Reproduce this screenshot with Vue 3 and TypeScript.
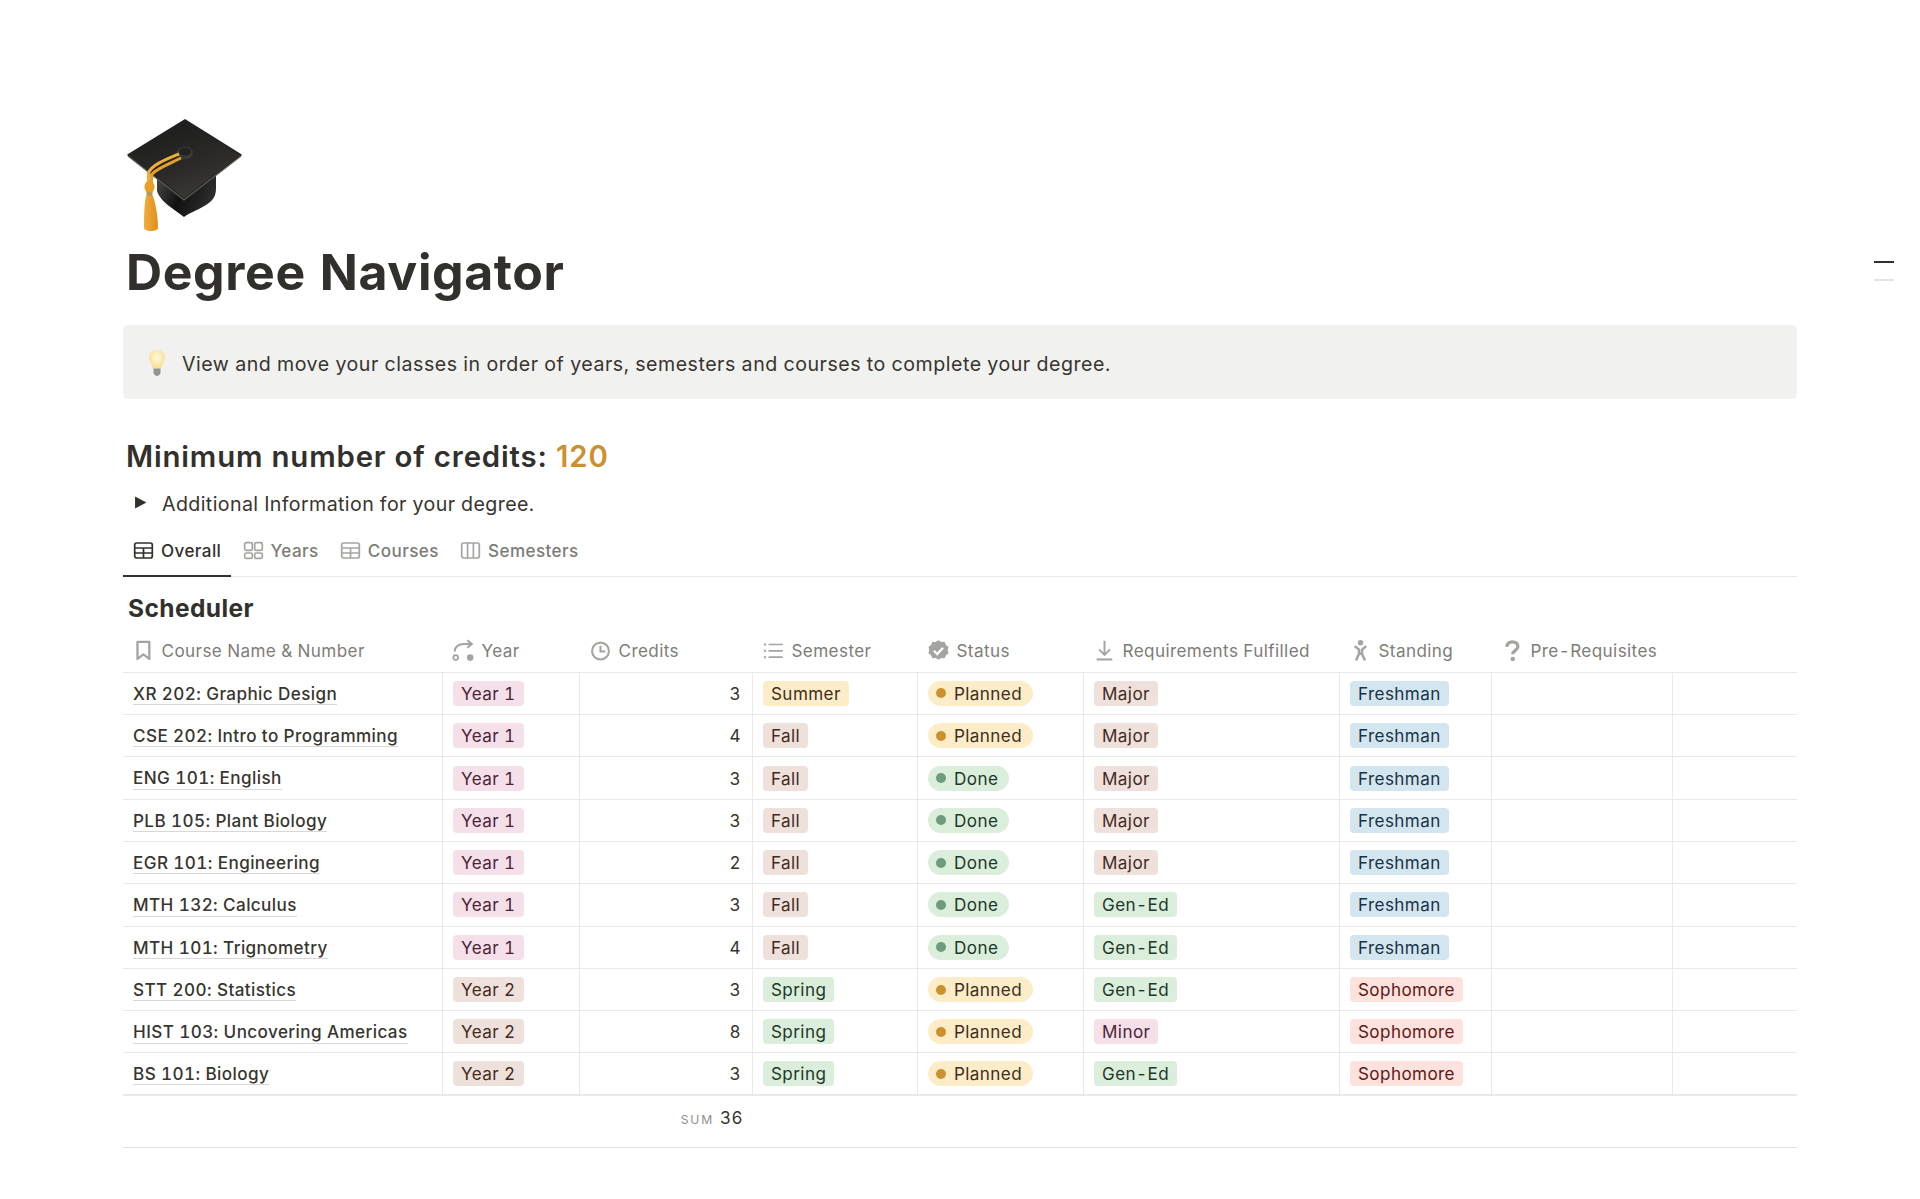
<script setup lang="ts">
type Tone = "pink" | "brown" | "yellow" | "green" | "blue" | "red";

interface Course {
  name: string;
  year: string;
  credits: number;
  semester: string;
  status: string;
  req: string;
  standing: string;
}

const tones: Record<string, Tone> = {
  "Year 1": "pink",
  "Year 2": "brown",
  Summer: "yellow",
  Fall: "brown",
  Spring: "green",
  Planned: "yellow",
  Done: "green",
  Major: "brown",
  Minor: "pink",
  "Gen-Ed": "green",
  Freshman: "blue",
  Sophomore: "red",
};

const tableIcon =
  '<rect x="1.7" y="3" width="17.6" height="15" rx="2" fill="none" stroke="currentColor" stroke-width="1.7"/><path d="M2 8h17M2 13h17M10.5 8v10" fill="none" stroke="currentColor" stroke-width="1.7"/>';
const galleryIcon =
  '<g fill="none" stroke="currentColor" stroke-width="1.7"><rect x="1.7" y="2.7" width="7.6" height="7.6" rx="1.4"/><rect x="11.7" y="2.7" width="7.6" height="7.6" rx="1.4"/><rect x="1.7" y="13" width="7.6" height="5.3" rx="1.4"/><rect x="11.7" y="13" width="7.6" height="5.3" rx="1.4"/></g>';
const boardIcon =
  '<rect x="1.7" y="3" width="17.6" height="15" rx="2" fill="none" stroke="currentColor" stroke-width="1.7"/><path d="M7.6 3v15M13.4 3v15" fill="none" stroke="currentColor" stroke-width="1.7"/>';

const tabs = [
  { label: "Overall", icon: tableIcon, active: true },
  { label: "Years", icon: galleryIcon, active: false },
  { label: "Courses", icon: tableIcon, active: false },
  { label: "Semesters", icon: boardIcon, active: false },
];

const headers = [
  {
    label: "Course Name & Number",
    icon: '<path d="M5 2.600h10.800v15.600l-5.400-4.200-5.400 4.200z" fill="none" stroke="currentColor" stroke-width="2.100" stroke-linejoin="round"/>',
  },
  {
    label: "Year",
    icon: '<circle cx="3.400" cy="17" r="2.200" fill="none" stroke="currentColor" stroke-width="1.600"/><circle cx="16.600" cy="17" r="3" fill="currentColor"/><path d="M2.400 11.500C2.800 7 6.300 4.600 11 4.600h6.500" fill="none" stroke="currentColor" stroke-width="1.900"/><path d="M14 1.200 18 4.600 14 8" fill="none" stroke="currentColor" stroke-width="1.900"/>',
  },
  {
    label: "Credits",
    icon: '<circle cx="10.500" cy="11" r="7.700" fill="none" stroke="currentColor" stroke-width="1.900"/><path d="M10.500 6.200v5.200h4.400" fill="none" stroke="currentColor" stroke-width="1.900"/>',
  },
  {
    label: "Semester",
    icon: '<path d="M6 5h13M6 10.800h13M6 16.600h13" stroke="currentColor" stroke-width="1.500"/><path d="M1.800 5h2M1.800 10.800h2M1.800 16.600h2" stroke="currentColor" stroke-width="1.800"/>',
  },
  {
    label: "Status",
    icon: '<path d="M10.500 1.200l2.600 1.600 3-.2 1.200 2.800 2.400 1.800-.8 2.900.8 2.900-2.400 1.800-1.200 2.800-3-.2-2.600 1.600-2.600-1.600-3 .2-1.200-2.800L1.300 13l.8-2.900-.8-2.900 2.400-1.800 1.200-2.800 3 .2z" fill="currentColor"/><path d="M6.300 10.800l3 3 5.400-5.800" fill="none" stroke="#fff" stroke-width="2"/>',
  },
  {
    label: "Requirements Fulfilled",
    icon: '<path d="M10.500 1.500v12.500M5.500 9.500l5 5 5-5" fill="none" stroke="currentColor" stroke-width="1.800"/><path d="M3.400 18.700h14.200" stroke="currentColor" stroke-width="1.900"/>',
  },
  {
    label: "Standing",
    icon: '<circle cx="10.500" cy="3.400" r="2.500" fill="currentColor"/><path d="M5.200 6.500l3.900 3.200v4L6.400 19.600M15.800 6.500l-3.900 3.200v4l2.700 5.900M9.100 13.500h2.800" fill="none" stroke="currentColor" stroke-width="2.300"/>',
  },
  {
    label: "Pre-Requisites",
    icon: '<path d="M5.300 7.200C5.500 4 7.600 2.600 10.400 2.600c3 0 5 1.600 5 4.100 0 2-1.200 2.900-2.600 3.900-1.400 1-2.100 1.800-2.100 3.400" fill="none" stroke="currentColor" stroke-width="2.900"/><circle cx="10.700" cy="18.200" r="2.100" fill="currentColor"/>',
  },
];

const courses: Course[] = [
  { name: "XR 202: Graphic Design", year: "Year 1", credits: 3, semester: "Summer", status: "Planned", req: "Major", standing: "Freshman" },
  { name: "CSE 202: Intro to Programming", year: "Year 1", credits: 4, semester: "Fall", status: "Planned", req: "Major", standing: "Freshman" },
  { name: "ENG 101: English", year: "Year 1", credits: 3, semester: "Fall", status: "Done", req: "Major", standing: "Freshman" },
  { name: "PLB 105: Plant Biology", year: "Year 1", credits: 3, semester: "Fall", status: "Done", req: "Major", standing: "Freshman" },
  { name: "EGR 101: Engineering", year: "Year 1", credits: 2, semester: "Fall", status: "Done", req: "Major", standing: "Freshman" },
  { name: "MTH 132: Calculus", year: "Year 1", credits: 3, semester: "Fall", status: "Done", req: "Gen-Ed", standing: "Freshman" },
  { name: "MTH 101: Trignometry", year: "Year 1", credits: 4, semester: "Fall", status: "Done", req: "Gen-Ed", standing: "Freshman" },
  { name: "STT 200: Statistics", year: "Year 2", credits: 3, semester: "Spring", status: "Planned", req: "Gen-Ed", standing: "Sophomore" },
  { name: "HIST 103: Uncovering Americas", year: "Year 2", credits: 8, semester: "Spring", status: "Planned", req: "Minor", standing: "Sophomore" },
  { name: "BS 101: Biology", year: "Year 2", credits: 3, semester: "Spring", status: "Planned", req: "Gen-Ed", standing: "Sophomore" },
];
</script>

<template>
  <div class="page">
    <div class="toc">
      <span class="toc-on"></span>
      <span class="toc-off"></span>
    </div>

    <svg class="cap" viewBox="0 0 125 120" width="125" height="120">
      <defs>
        <linearGradient id="board" x1="0.2" y1="0" x2="0.7" y2="1">
          <stop offset="0" stop-color="#1b1b1b" />
          <stop offset="0.6" stop-color="#2b2a28" />
          <stop offset="1" stop-color="#3d3b37" />
        </linearGradient>
        <linearGradient id="under" x1="0" y1="0" x2="1" y2="0.3">
          <stop offset="0" stop-color="#4a4a4a" />
          <stop offset="0.5" stop-color="#111" />
          <stop offset="1" stop-color="#2c2c2c" />
        </linearGradient>
        <linearGradient id="tassel" x1="0" y1="0" x2="1" y2="0">
          <stop offset="0" stop-color="#f2ad3a" />
          <stop offset="1" stop-color="#dc9020" />
        </linearGradient>
      </defs>
      <path d="M34 58v18c2 6 6 10 12 15l15 11c6-5 18-8 26-15 5-4 6-9 6-14V58z" fill="url(#under)" />
      <path d="M62 5 118 40 61 84 5 40z" fill="url(#board)" stroke="#222" stroke-width="1.500" stroke-linejoin="round" />
      <path d="M5 41 61 85 118 41" fill="none" stroke="#5c5a56" stroke-width="1.200" />
      <ellipse cx="62" cy="38" rx="8" ry="6.500" fill="#3a3a3a" />
      <ellipse cx="62" cy="36.500" rx="6" ry="4" fill="#222" />
      <path d="M56 39C44 44 28 50 25.500 58v10" fill="none" stroke="#f0ae3c" stroke-width="3" />
      <path d="M58 43C46 49 32 54 28.500 60v8" fill="none" stroke="#e5a02a" stroke-width="3" />
      <ellipse cx="26.500" cy="72" rx="5" ry="6.500" fill="#e99f28" />
      <rect x="23.500" y="77" width="6" height="4.500" fill="#b99a55" />
      <path d="M23 81h7c3 9 5 22 5 32 0 4-14 4-14 0 0-10 0-23 2-32z" fill="url(#tassel)" />
    </svg>

    <h1 class="title">Degree Navigator</h1>

    <div class="callout">
      <svg class="bulb" viewBox="0 0 18 28" width="18" height="28">
        <defs>
          <radialGradient id="glow" cx="0.5" cy="0.4" r="0.6">
            <stop offset="0" stop-color="#fffbe0" />
            <stop offset="1" stop-color="#f6dc8e" />
          </radialGradient>
        </defs>
        <path d="M9 1C4 1 1 4.500 1 8.500c0 4 3 6 4 11h8c1-5 4-7 4-11C17 4.500 14 1 9 1z" fill="url(#glow)" />
        <path d="M5.500 19.500h7v4c0 1-1.500 3.500-3.500 3.500s-3.500-2.500-3.500-3.500z" fill="#93938f" />
      </svg>
      <span>View and move your classes in order of years, semesters and courses to complete your degree.</span>
    </div>

    <h2 class="credits">Minimum number of credits: <span class="gold">120</span></h2>

    <div class="toggle">
      <svg viewBox="0 0 12 12" width="13" height="13"><path d="M1 0.500 11.500 6 1 11.500z" fill="#32302c" /></svg>
      <span>Additional Information for your degree.</span>
    </div>

    <div class="tabs">
      <div v-for="tab in tabs" :key="tab.label" class="tab" :class="{ active: tab.active }">
        <svg viewBox="0 0 21 21" width="21" height="21" v-html="tab.icon"></svg>
        <span>{{ tab.label }}</span>
      </div>
    </div>

    <h3 class="table-title">Scheduler</h3>

    <div class="table">
      <div class="row head">
        <div v-for="h in headers" :key="h.label" class="th">
          <svg viewBox="0 0 21 21" width="23" height="23" v-html="h.icon"></svg>
          <span>{{ h.label }}</span>
        </div>
        <div></div>
      </div>

      <div v-for="c in courses" :key="c.name" class="row body">
        <div class="cell name"><span>{{ c.name }}</span></div>
        <div class="cell"><span class="tag" :class="tones[c.year]">{{ c.year }}</span></div>
        <div class="cell num">{{ c.credits }}</div>
        <div class="cell"><span class="tag" :class="tones[c.semester]">{{ c.semester }}</span></div>
        <div class="cell">
          <span class="tag pill" :class="tones[c.status]"><i class="dot"></i>{{ c.status }}</span>
        </div>
        <div class="cell"><span class="tag" :class="tones[c.req]">{{ c.req }}</span></div>
        <div class="cell"><span class="tag" :class="tones[c.standing]">{{ c.standing }}</span></div>
        <div class="cell"></div>
        <div class="cell"></div>
      </div>

      <div class="row foot">
        <div></div>
        <div></div>
        <div class="sum"><small>SUM</small>36</div>
      </div>
    </div>
  </div>
</template>

<style scoped>
.page {
  position: relative;
  width: 1920px;
  height: 1199px;
  box-sizing: border-box;
  padding: 115px 123px 0;
  font-family: Inter, "Liberation Sans", sans-serif;
  font-variant-numeric: tabular-nums;
  letter-spacing: 0.025em;
  color: #37352f;
  background: #fff;
  overflow: hidden;
}

.toc {
  position: absolute;
  top: 261px;
  left: 1874px;
  display: flex;
  flex-direction: column;
  gap: 16px;
}
.toc span {
  display: block;
  width: 20px;
  height: 2px;
}
.toc-on {
  background: #32302c;
}
.toc-off {
  background: #e3e3e1;
}

.cap {
  display: block;
}

.title {
  margin: 0;
  padding-left: 3px;
  height: 75px;
  line-height: 75px;
  font-size: 50px;
  letter-spacing: 0.012em;
  font-weight: 700;
  color: #32302c;
}

.callout {
  margin-top: 15px;
  height: 74px;
  display: flex;
  align-items: center;
  padding: 3px 0 0 25px;
  box-sizing: border-box;
  background: #f1f1ef;
  border-radius: 5px;
  font-size: 19.6px;
  letter-spacing: 0.026em;
}
.bulb {
  margin-right: 16px;
  margin-bottom: 2px;
}

.credits {
  margin: 35px 0 0 3px;
  height: 46px;
  line-height: 46px;
  font-size: 29.4px;
  font-weight: 600;
  font-variant-numeric: normal;
  letter-spacing: 0.0285em;
  color: #32302c;
}
.gold {
  color: #cb912f;
}

.toggle {
  margin-top: 5px;
  height: 38px;
  display: flex;
  align-items: center;
  padding-left: 11px;
  gap: 15px;
  font-size: 19.6px;
}
.toggle svg {
  margin-top: -3px;
}

.tabs {
  margin-top: 10px;
  height: 43px;
  display: flex;
  gap: 1.2px;
  border-bottom: 1px solid #e9e9e7;
  font-size: 17.1px;
  color: #7d7c78;
}
.tab {
  position: relative;
  display: flex;
  align-items: center;
  gap: 7px;
  padding: 0 10px 8px;
  font-weight: 500;
}
.tab svg {
  color: #a5a4a0;
}
.tab.active {
  color: #32302c;
}
.tab.active svg {
  color: #32302c;
}
.tab.active::after {
  content: "";
  position: absolute;
  left: 0;
  right: 0;
  bottom: -1px;
  height: 2px;
  background: #32302c;
}

.table-title {
  margin: 13px 0 0 5px;
  height: 36px;
  line-height: 36px;
  font-size: 24.5px;
  font-weight: 700;
  color: #32302c;
}

.row {
  display: grid;
  grid-template-columns: 320px 137px 173px 165px 166px 256px 152px 181px 124px;
  box-sizing: border-box;
}
.head {
  height: 42.8px;
  margin-top: 4px;
  border-bottom: 1px solid #e9e9e7;
  font-size: 17.1px;
  color: #7d7c78;
}
.th {
  display: flex;
  align-items: center;
  gap: 6.5px;
  padding-left: 9px;
  white-space: nowrap;
}
.th svg {
  color: #a5a4a0;
  flex: none;
}

.body {
  height: 42.3px;
  border-bottom: 1px solid #e9e9e7;
  font-size: 17.1px;
}
.body:nth-last-child(2) {
  border-bottom-width: 2px;
}
.cell {
  display: flex;
  align-items: center;
  padding: 0 10px;
  border-right: 1px solid #e9e9e7;
  min-width: 0;
}
.cell:last-child {
  border-right: none;
}
.name span {
  font-weight: 500;
  color: #37352f;
  line-height: 1.25;
  margin-top: 1px;
  border-bottom: 1px solid #d9d8d6;
}
.num {
  justify-content: flex-end;
  padding-right: 11px;
}

.tag {
  display: inline-flex;
  align-items: center;
  height: 25px;
  padding: 0 8px;
  border-radius: 4px;
  white-space: nowrap;
}
.pill {
  border-radius: 13px;
  padding: 0 11px 0 8px;
}
.dot {
  width: 10px;
  height: 10px;
  border-radius: 50%;
  margin-right: 8px;
}
.pink {
  background: #f5e0e9;
  color: #4c2337;
}
.brown {
  background: #eee0da;
  color: #442a1e;
}
.yellow {
  background: #fdecc8;
  color: #402c1b;
}
.yellow .dot {
  background: #cb912f;
}
.green {
  background: #dbeddb;
  color: #1c3829;
}
.green .dot {
  background: #6c9b7d;
}
.blue {
  background: #d3e5ef;
  color: #183347;
}
.red {
  background: #ffe2dd;
  color: #5d1715;
}

.foot {
  height: 52px;
  border-bottom: 1px solid #e3e3e1;
}
.sum {
  display: flex;
  justify-content: flex-end;
  align-items: baseline;
  gap: 6px;
  padding: 11px 10px 0 0;
  font-size: 17.1px;
}
.sum small {
  font-size: 12.2px;
  letter-spacing: 1.8px;
  color: #8f8e8a;
}
</style>

<style>
html,
body {
  margin: 0;
  background: #fff;
}
</style>
